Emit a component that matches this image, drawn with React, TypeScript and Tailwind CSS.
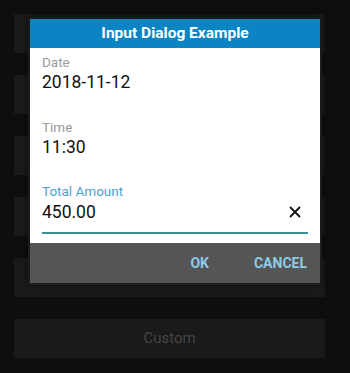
export default function App() {
  const rows = [0, 1, 2, 3, 4];

  return (
    <div
      className="relative w-[350px] h-[373px] overflow-hidden bg-[#0e0e0e]"
      style={{ fontFamily: 'Roboto, "Liberation Sans", sans-serif' }}
    >
      {/* buttons behind the dialog */}
      <div className="flex flex-col gap-[22px] pl-[14px] pr-[25px] pt-[14px]">
        {rows.map((r) => (
          <div key={r} className="h-[39px] bg-[#1a1a1a]" />
        ))}
        <div className="h-[39px] bg-[#1a1a1a] flex items-center justify-center text-[15px] text-[#454545]">
          Custom
        </div>
      </div>

      {/* dialog */}
      <div className="absolute left-[28px] top-[17px] w-[294px] border-2 border-[#1c1c1c] shadow-[0_0_6px_rgba(0,0,0,0.6)]">
        <div className="h-[29px] bg-[#0a84c2] flex items-center justify-center text-white font-bold text-[15.5px]">
          Input Dialog Example
        </div>
        <div className="bg-white px-[12px] pt-[6px] pb-[9px]">
          <div className="text-[13.5px] leading-[16px] text-[#9a9a9a]">Date</div>
          <div className="text-[17.5px] leading-[24px] text-[#111]">2018-11-12</div>

          <div className="mt-[25px] text-[13.5px] leading-[16px] text-[#9a9a9a]">Time</div>
          <div className="text-[17.5px] leading-[24px] text-[#111]">11:30</div>

          <div className="mt-[24px] text-[13.5px] leading-[16px] text-[#4aa2d2]">Total Amount</div>
          <div className="flex items-center justify-between h-[26px]">
            <span className="text-[17.5px] leading-[24px] text-[#111]">450.00</span>
            <svg width="12" height="12" viewBox="0 0 12 12" className="mr-[7px]">
              <path d="M1 1L11 11M11 1L1 11" stroke="#111" strokeWidth="1.8" />
            </svg>
          </div>
          <div className="mt-[7px] h-[2px] bg-[#3a8f9a]" />
        </div>
        <div className="h-[40px] bg-[#555555] flex items-center justify-end gap-[45px] pr-[13px] text-[14px] font-bold text-[#8ecbe6]">
          <span>OK</span>
          <span>CANCEL</span>
        </div>
      </div>
    </div>
  );
}
